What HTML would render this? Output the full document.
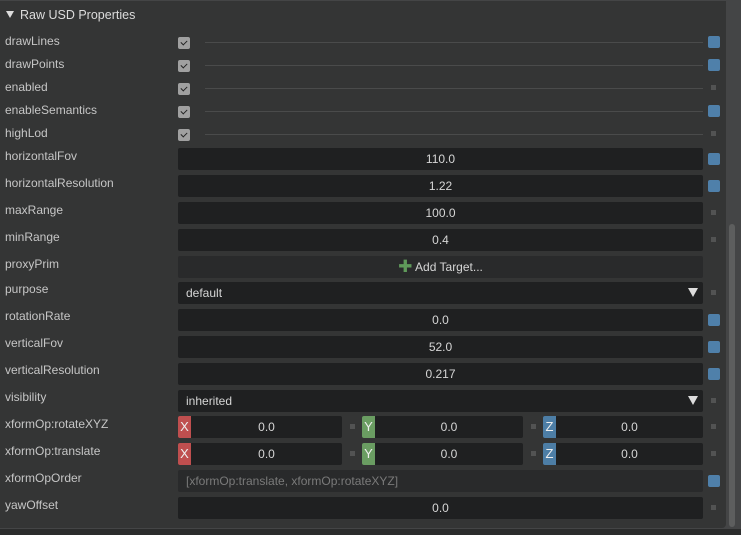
<!DOCTYPE html>
<html><head><style>
body{margin:0;width:741px;height:535px;background:#444546;overflow:hidden;font-family:"Liberation Sans","DejaVu Sans",sans-serif;font-size:12px;position:relative}
.panel{position:absolute;left:0;top:1px;width:726px;height:527px;background:#343535;border-radius:0 0 4px 0}
.bot{position:absolute;left:0;top:529px;width:741px;height:6px;background:#2b2c2c}
.thumb{position:absolute;left:729px;top:224px;width:6px;height:303px;background:#5d5e5e;border-radius:3px}
.a{position:absolute}
.lbl{position:absolute;left:5px;color:#c6c6c6}
.fld{position:absolute;left:178px;width:525px;height:22px;background:#1f2021;border-radius:2px;color:#d6d6d6;text-align:center;line-height:22px}
.cb{position:absolute;left:178px;width:12px;height:12px;background:#a0a0a0;border-radius:2px}
.cb:after{content:"";position:absolute;left:3px;top:3px;width:5px;height:3px;border-left:1.5px solid #222;border-bottom:1.5px solid #222;transform:rotate(-45deg)}
.ln{position:absolute;left:205px;width:498px;height:1px;background:#4a4b4b}
.bl{position:absolute;left:708px;width:12px;height:12px;background:#4f80aa;border-radius:2px}
.sm{position:absolute;left:711px;width:5px;height:5px;background:#525353}
.vx{position:absolute;height:22px;background:#1f2021;border-radius:2px;color:#d6d6d6;text-align:center;line-height:22px;box-sizing:border-box;padding-left:13px}
.tag{position:absolute;width:13px;height:22px;color:#eee;font-size:13px;line-height:22px;text-align:center;border-radius:2px 0 0 2px}
</style></head><body>
<div class="panel"></div>
<div class="thumb"></div>
<div class="bot"></div>
<div class="a" style="left:6px;top:11px;width:0;height:0;border-left:4px solid transparent;border-right:4px solid transparent;border-top:7px solid #ddd"></div>
<div class="a" style="left:20px;top:8px;color:#dcdcdc;font-size:12.5px">Raw USD Properties</div>

<div class="lbl" style="top:34px">drawLines</div><div class="cb" style="top:37px"></div><div class="ln" style="top:42px"></div><div class="bl" style="top:36px"></div>
<div class="lbl" style="top:57px">drawPoints</div><div class="cb" style="top:60px"></div><div class="ln" style="top:65px"></div><div class="bl" style="top:59px"></div>
<div class="lbl" style="top:80px">enabled</div><div class="cb" style="top:83px"></div><div class="ln" style="top:88px"></div><div class="sm" style="top:85px"></div>
<div class="lbl" style="top:103px">enableSemantics</div><div class="cb" style="top:106px"></div><div class="ln" style="top:111px"></div><div class="bl" style="top:105px"></div>
<div class="lbl" style="top:126px">highLod</div><div class="cb" style="top:129px"></div><div class="ln" style="top:134px"></div><div class="sm" style="top:131px"></div>

<div class="lbl" style="top:149px">horizontalFov</div><div class="fld" style="top:148px">110.0</div><div class="bl" style="top:153px"></div>
<div class="lbl" style="top:176px">horizontalResolution</div><div class="fld" style="top:175px">1.22</div><div class="bl" style="top:180px"></div>
<div class="lbl" style="top:203px">maxRange</div><div class="fld" style="top:202px">100.0</div><div class="sm" style="top:210px"></div>
<div class="lbl" style="top:230px">minRange</div><div class="fld" style="top:229px">0.4</div><div class="sm" style="top:237px"></div>
<div class="lbl" style="top:257px">proxyPrim</div><div class="fld" style="top:256px;background:#292a2b"><span style="color:#5f9a5a;font-weight:bold;font-size:17px;vertical-align:-1px">✚</span> Add Target...</div>
<div class="lbl" style="top:282px">purpose</div><div class="fld" style="top:282px;text-align:left;padding-left:8px;width:517px">default</div><div class="a" style="left:688px;top:288px;border-left:5px solid transparent;border-right:5px solid transparent;border-top:9px solid #ddd"></div><div class="sm" style="top:290px"></div>
<div class="lbl" style="top:309px">rotationRate</div><div class="fld" style="top:309px">0.0</div><div class="bl" style="top:314px"></div>
<div class="lbl" style="top:336px">verticalFov</div><div class="fld" style="top:336px">52.0</div><div class="bl" style="top:341px"></div>
<div class="lbl" style="top:363px">verticalResolution</div><div class="fld" style="top:363px">0.217</div><div class="bl" style="top:368px"></div>
<div class="lbl" style="top:390px">visibility</div><div class="fld" style="top:390px;text-align:left;padding-left:8px;width:517px">inherited</div><div class="a" style="left:688px;top:396px;border-left:5px solid transparent;border-right:5px solid transparent;border-top:9px solid #ddd"></div><div class="sm" style="top:398px"></div>

<div class="lbl" style="top:417px">xformOp:rotateXYZ</div>
<div class="vx" style="left:178px;top:416px;width:164px">0.0</div><div class="tag" style="left:178px;top:416px;background:#bf4f4f">X</div><div class="sm" style="left:350px;top:424px"></div>
<div class="vx" style="left:362px;top:416px;width:161px">0.0</div><div class="tag" style="left:362px;top:416px;background:#6a9d62">Y</div><div class="sm" style="left:531px;top:424px"></div>
<div class="vx" style="left:543px;top:416px;width:160px">0.0</div><div class="tag" style="left:543px;top:416px;background:#4d7ea6">Z</div><div class="sm" style="top:424px"></div>

<div class="lbl" style="top:444px">xformOp:translate</div>
<div class="vx" style="left:178px;top:443px;width:164px">0.0</div><div class="tag" style="left:178px;top:443px;background:#bf4f4f">X</div><div class="sm" style="left:350px;top:451px"></div>
<div class="vx" style="left:362px;top:443px;width:161px">0.0</div><div class="tag" style="left:362px;top:443px;background:#6a9d62">Y</div><div class="sm" style="left:531px;top:451px"></div>
<div class="vx" style="left:543px;top:443px;width:160px">0.0</div><div class="tag" style="left:543px;top:443px;background:#4d7ea6">Z</div><div class="sm" style="top:451px"></div>

<div class="lbl" style="top:471px">xformOpOrder</div><div class="fld" style="top:470px;background:#292a2b;color:#7a7a7a;text-align:left;padding-left:8px;width:517px">[xformOp:translate, xformOp:rotateXYZ]</div><div class="bl" style="top:475px"></div>
<div class="lbl" style="top:498px">yawOffset</div><div class="fld" style="top:497px">0.0</div><div class="sm" style="top:505px"></div>
</body></html>
